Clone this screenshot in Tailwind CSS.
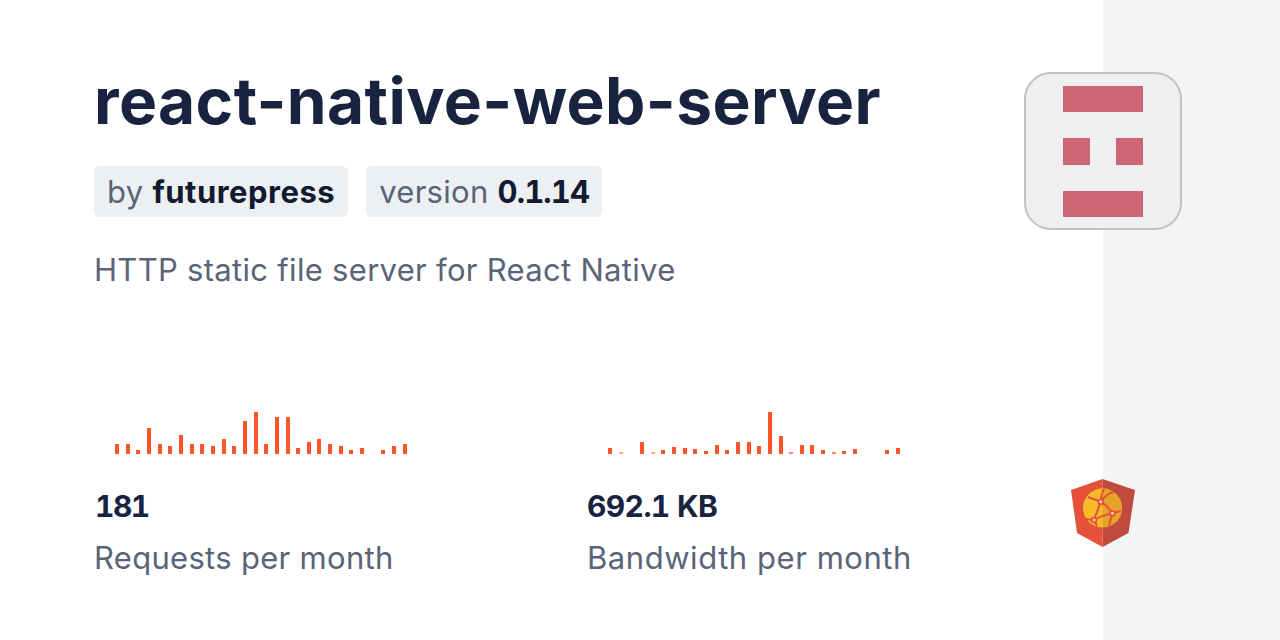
<!DOCTYPE html>
<html lang="en">
<head>
    <meta charset="UTF-8" />
    <title>react-native-web-server CDN by jsDelivr</title>
    <script src="https://cdn.jsdelivr.net/npm/@tailwindcss/browser@4"></script>
</head>
<body class="bg-white">
<div class="relative flex w-[1280px] h-[640px] overflow-hidden font-['Inter',sans-serif]">
    <main class="flex-1 pl-[94px] pt-[62px]">
        <h1 class="h-[78px] text-[64px] leading-[78px] font-bold tracking-[0.4px] text-[#17233f] whitespace-nowrap">react-native-web-server</h1>
        <div class="flex gap-[18px] mt-[26px]">
            <div class="h-[51px] px-[13px] rounded-[6px] bg-[#edf0f3] text-[31px] leading-[51px] tracking-[0.3px] text-[#5a6478]">by <b class="font-bold tracking-[0.5px] text-[#111a2e]">futurepress</b></div>
            <div class="h-[51px] px-[13px] rounded-[6px] bg-[#edf0f3] text-[31px] leading-[51px] tracking-[0.3px] text-[#5a6478]">version <b class="font-bold tabular-nums tracking-[-0.9px] text-[#111a2e]">0.1.14</b></div>
        </div>
        <p class="mt-[29px] text-[31px] leading-[48px] tracking-[0.3px] text-[#5a6478]">HTTP static file server for React Native</p>
        <div class="flex mt-[117px]">
            <section class="w-[493px]">
                <div class="ml-[21px] flex items-end gap-[6.67px] h-[43px]">
                    <i class="w-[4px] h-[10px] bg-[#ff5627]"></i><i class="w-[4px] h-[10px] bg-[#ff5627]"></i><i class="w-[4px] h-[4px] bg-[#ff5627]"></i><i class="w-[4px] h-[26px] bg-[#ff5627]"></i><i class="w-[4px] h-[10px] bg-[#ff5627]"></i><i class="w-[4px] h-[8px] bg-[#ff5627]"></i><i class="w-[4px] h-[19px] bg-[#ff5627]"></i><i class="w-[4px] h-[10px] bg-[#ff5627]"></i><i class="w-[4px] h-[10px] bg-[#ff5627]"></i><i class="w-[4px] h-[8px] bg-[#ff5627]"></i><i class="w-[4px] h-[15px] bg-[#ff5627]"></i><i class="w-[4px] h-[8px] bg-[#ff5627]"></i><i class="w-[4px] h-[33px] bg-[#ff5627]"></i><i class="w-[4px] h-[42px] bg-[#ff5627]"></i><i class="w-[4px] h-[10px] bg-[#ff5627]"></i><i class="w-[4px] h-[37px] bg-[#ff5627]"></i><i class="w-[4px] h-[37px] bg-[#ff5627]"></i><i class="w-[4px] h-[6px] bg-[#ff5627]"></i><i class="w-[4px] h-[12px] bg-[#ff5627]"></i><i class="w-[4px] h-[15px] bg-[#ff5627]"></i><i class="w-[4px] h-[10px] bg-[#ff5627]"></i><i class="w-[4px] h-[8px] bg-[#ff5627]"></i><i class="w-[4px] h-[4px] bg-[#ff5627]"></i><i class="w-[4px] h-[6px] bg-[#ff5627]"></i><i class="w-[4px] h-0"></i><i class="w-[4px] h-[4px] bg-[#ff5627]"></i><i class="w-[4px] h-[8px] bg-[#ff5627]"></i><i class="w-[4px] h-[10px] bg-[#ff5627]"></i>
                </div>
                <div class="mt-[32px] ml-[1px] text-[30px] leading-[40px] font-bold tabular-nums tracking-[-1.5px] text-[#17233f]">181</div>
                <div class="mt-[10px] text-[31px] leading-[44px] tracking-[0.3px] text-[#5a6478]">Requests per month</div>
            </section>
            <section>
                <div class="ml-[21px] flex items-end gap-[6.67px] h-[43px]">
                    <i class="w-[4px] h-[6px] bg-[#ff5627]"></i><i class="w-[4px] h-[2px] bg-[#ff5627]/50"></i><i class="w-[4px] h-0"></i><i class="w-[4px] h-[12px] bg-[#ff5627]"></i><i class="w-[4px] h-[2px] bg-[#ff5627]/50"></i><i class="w-[4px] h-[4px] bg-[#ff5627]"></i><i class="w-[4px] h-[7px] bg-[#ff5627]"></i><i class="w-[4px] h-[6px] bg-[#ff5627]"></i><i class="w-[4px] h-[5px] bg-[#ff5627]"></i><i class="w-[4px] h-[3px] bg-[#ff5627]"></i><i class="w-[4px] h-[9px] bg-[#ff5627]"></i><i class="w-[4px] h-[4px] bg-[#ff5627]"></i><i class="w-[4px] h-[12px] bg-[#ff5627]"></i><i class="w-[4px] h-[12px] bg-[#ff5627]"></i><i class="w-[4px] h-[8px] bg-[#ff5627]"></i><i class="w-[4px] h-[42px] bg-[#ff5627]"></i><i class="w-[4px] h-[18px] bg-[#ff5627]"></i><i class="w-[4px] h-[2px] bg-[#ff5627]/70"></i><i class="w-[4px] h-[9px] bg-[#ff5627]"></i><i class="w-[4px] h-[9px] bg-[#ff5627]"></i><i class="w-[4px] h-[4px] bg-[#ff5627]"></i><i class="w-[4px] h-[2px] bg-[#ff5627]/70"></i><i class="w-[4px] h-[3px] bg-[#ff5627]"></i><i class="w-[4px] h-[5px] bg-[#ff5627]"></i><i class="w-[4px] h-0"></i><i class="w-[4px] h-0"></i><i class="w-[4px] h-[4px] bg-[#ff5627]"></i><i class="w-[4px] h-[6px] bg-[#ff5627]"></i>
                </div>
                <div class="mt-[32px] text-[30px] leading-[40px] font-bold tabular-nums tracking-[-0.6px] text-[#17233f]">692.1 KB</div>
                <div class="mt-[10px] text-[31px] leading-[44px] tracking-[0.55px] text-[#5a6478]">Bandwidth per month</div>
            </section>
        </div>
    </main>
    <aside class="w-[177px] bg-[#f3f4f6]"></aside>

    <svg class="absolute left-[1024px] top-[72px]" width="158" height="158" viewBox="0 0 158 158">
        <rect x="1" y="1" width="156" height="156" rx="26" fill="#efefef" stroke="#c2c2c2" stroke-width="2"/>
        <rect x="39" y="14" width="80" height="26" fill="#cd6574"/>
        <rect x="39" y="66" width="27" height="27" fill="#cd6574"/>
        <rect x="92" y="66" width="27" height="27" fill="#cd6574"/>
        <rect x="39" y="119" width="80" height="26" fill="#cd6574"/>
    </svg>

    <svg class="absolute left-[1071px] top-[479px]" width="64" height="68" viewBox="0 0 64 68">
        <path d="M31.5 0 0 11 6 54 31.5 68Z" fill="#e6513c"/>
        <path d="M31.5 0 64 11 57.5 54 31.5 68Z" fill="#c04a3c"/>
        <circle cx="31.5" cy="29" r="19.5" fill="#f7bb2a"/>
        <path d="M31.5 9.5A19.5 19.5 0 0 1 31.5 48.500Z" fill="#e5a329"/>
        <path d="M29.7 22.7Q30 15 33 10M29.7 22.7Q36 14 43 13M29.7 22.7Q22 20 17 18M29.7 22.7Q37 27 41.3 34.3M29.7 22.7 23 41M23 41Q32 36 41.3 34.3M41.3 34.3 50 32M23 41 13 40M23 41 26 47M41.3 34.3 38 47" fill="none" stroke="#e6513c" stroke-width="2"/>
        <circle cx="29.7" cy="22.7" r="2.4" fill="#f7d9a0" stroke="#e6513c" stroke-width="1.8"/>
        <circle cx="41.3" cy="34.3" r="2.4" fill="#f7d9a0" stroke="#e6513c" stroke-width="1.8"/>
        <circle cx="23" cy="41" r="2.4" fill="#f7d9a0" stroke="#e6513c" stroke-width="1.8"/>
    </svg>
</div>
</body>
</html>
